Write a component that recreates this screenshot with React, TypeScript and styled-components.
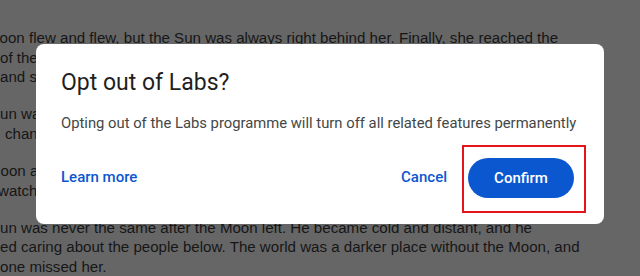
import React from "react";
import styled, { createGlobalStyle } from "styled-components";

const Global = createGlobalStyle`
  html, body { margin: 0; padding: 0; }
  body {
    width: 640px;
    height: 276px;
    overflow: hidden;
    background: #666666;
  }
`;

const Page = styled.div`
  position: relative;
  width: 640px;
  height: 276px;
  overflow: hidden;
  background: #666666;
`;

const Story = styled.div`
  padding-top: 28px;
  font-family: "Liberation Sans", Arial, sans-serif;
  font-size: 15.1px;
  line-height: 19.6px;
  color: #161616;
`;

const Para = styled.p`
  margin: 0 0 17.5px 0;
`;

const Line = styled.span<{ $indent?: number }>`
  display: block;
  white-space: nowrap;
  margin-left: ${(p) => p.$indent ?? 0}px;
`;

const Dialog = styled.div`
  position: absolute;
  left: 36px;
  top: 44px;
  width: 568px;
  height: 180px;
  box-sizing: border-box;
  background: #ffffff;
  border-radius: 8px;
  padding: 23px 30px 26px 25px;
  display: flex;
  flex-direction: column;
  font-family: Roboto, "Noto Sans", sans-serif;
`;

const Title = styled.h2`
  margin: 0;
  font-size: 23px;
  line-height: 32px;
  font-weight: 400;
  color: #1f1f1f;
`;

const Body = styled.p`
  margin: 14px 0 0 0;
  font-size: 14.8px;
  line-height: 20px;
  white-space: nowrap;
  color: #444746;
`;

const Actions = styled.div`
  margin-top: auto;
  display: flex;
  align-items: center;
`;

const TextButton = styled.button`
  border: none;
  background: none;
  padding: 0 0 2px 0;
  font-family: Roboto, "Noto Sans", sans-serif;
  font-size: 15px;
  font-weight: 500;
  color: #0b57d0;
  cursor: pointer;
`;

const Spacer = styled.div`
  flex: 1;
`;

const Highlight = styled.div`
  position: relative;
  margin-left: 21px;
`;

const HighlightBox = styled.div`
  position: absolute;
  left: -6px;
  right: -12px;
  top: -13px;
  bottom: -15px;
  border: 2px solid #e5141c;
  pointer-events: none;
`;

const FilledButton = styled.button`
  display: flex;
  align-items: center;
  justify-content: center;
  width: 106px;
  height: 40px;
  border: none;
  border-radius: 20px;
  background: #0b57d0;
  color: #ffffff;
  font-family: Roboto, "Noto Sans", sans-serif;
  font-size: 15px;
  font-weight: 500;
  cursor: pointer;
`;

export default function App() {
  return (
    <>
      <Global />
      <Page>
        <Story>
          <Para>
            <Line $indent={-13}>
              Moon flew and flew, but the Sun was always right behind her. Finally, she reached the
            </Line>
            <Line>of the sky, where the stars live. She hid among them, and the Sun could not</Line>
            <Line>and she was safe at last, shining softly over the sleeping world.</Line>
          </Para>
          <Para>
            <Line $indent={-10}>Sun waited and waited, but the Moon never came back to him.</Line>
            <Line $indent={5}>changed his heart forever.</Line>
          </Para>
          <Para>
            <Line $indent={-12}>Moon and the stars became friends, and together they</Line>
            <Line $indent={-2}>watched over the people of the earth every night.</Line>
          </Para>
          <Para>
            <Line $indent={-10}>
              Sun was never the same after the Moon left. He became cold and distant, and he
            </Line>
            <Line>
              ed caring about the people below. The world was a darker place without the Moon, and
            </Line>
            <Line>one missed her.</Line>
          </Para>
        </Story>
        <Dialog role="dialog">
          <Title>Opt out of Labs?</Title>
          <Body>
            Opting out of the Labs programme will turn off all related features permanently
          </Body>
          <Actions>
            <TextButton>Learn more</TextButton>
            <Spacer />
            <TextButton>Cancel</TextButton>
            <Highlight>
              <FilledButton>Confirm</FilledButton>
              <HighlightBox />
            </Highlight>
          </Actions>
        </Dialog>
      </Page>
    </>
  );
}
